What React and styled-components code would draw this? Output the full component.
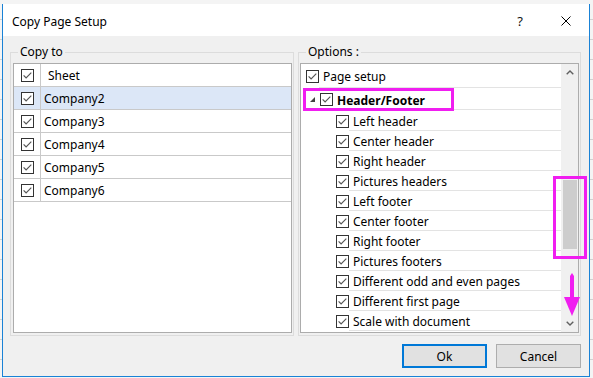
import React from 'react';
import styled, { createGlobalStyle } from 'styled-components';

const GlobalStyle = createGlobalStyle`
  html, body {
    margin: 0;
    padding: 0;
  }
  body {
    width: 593px;
    height: 378px;
    overflow: hidden;
    font-family: "Noto Sans", "Open Sans", sans-serif;
    font-size: 12px;
    color: #000;
  }
`;

const Desk = styled.div`
  width: 593px;
  height: 378px;
  box-sizing: border-box;
  padding: 4px 0 0 2px;
  background-color: #f4f4f4;
  background-image: repeating-linear-gradient(
    to bottom,
    transparent 0,
    transparent 19px,
    #d2d2d2 19px,
    #d2d2d2 20px
  );
`;

const Dialog = styled.div`
  width: 588px;
  height: 373px;
  box-sizing: border-box;
  border: 1px solid #1a82d6;
  border-top: none;
  display: flex;
  flex-direction: column;
  background: #f0f0f0;
`;

const TitleBar = styled.div`
  height: 32px;
  flex: none;
  display: flex;
  align-items: center;
  background: #fff;
  padding-left: 9px;
`;

const Title = styled.div`
  flex: 1;
  font-size: 12px;
  padding-top: 3px;
`;

const CaptionButton = styled.div`
  width: 46px;
  height: 32px;
  display: flex;
  align-items: center;
  justify-content: center;
  font-size: 13px;
  color: #111;
  padding-top: 1px;
  box-sizing: border-box;
`;

const Body = styled.div`
  flex: 1;
  display: flex;
  flex-direction: column;
  gap: 8px;
  padding: 8px 8px 8px 7px;
  min-height: 0;
`;

const Panels = styled.div`
  flex: 1;
  display: flex;
  gap: 4px;
  min-height: 0;
`;

const Group = styled.fieldset`
  margin: 0;
  width: ${(p) => p.$width}px;
  box-sizing: border-box;
  border: 1px solid #dcdcdc;
  padding: 3px 1px 2px ${(p) => p.$padLeft}px;
  display: flex;
  min-width: 0;
`;

const Legend = styled.legend`
  padding: 0 2px;
  margin-left: ${(p) => p.$offset}px;
  line-height: 16px;
  font-size: 12px;
`;

const ListBox = styled.div`
  flex: 1;
  position: relative;
  border: 1px solid #acacac;
  background: #fff;
  display: flex;
  align-items: stretch;
`;

const Table = styled.div`
  flex: 1;
  display: flex;
  flex-direction: column;
`;

const TableRow = styled.div`
  height: 22px;
  display: flex;
  align-items: center;
  border-bottom: 1px solid #c9c9c9;
  background: ${(p) => (p.$selected ? '#dce7f7' : '#fff')};
`;

const CheckCell = styled.div`
  width: 26px;
  height: 100%;
  flex: none;
  border-right: 1px solid #c9c9c9;
  display: flex;
  align-items: center;
  justify-content: center;
`;

const NameCell = styled.div`
  padding-left: ${(p) => (p.$header ? 7 : 3)}px;
  padding-top: 1px;
`;

const Tree = styled.div`
  flex: 1;
  display: flex;
  flex-direction: column;
`;

const TopRow = styled.div`
  height: ${(p) => p.$height}px;
  display: flex;
  align-items: center;
  padding-left: ${(p) => p.$indent}px;
`;

const RowLabel = styled.div`
  flex: 1;
  align-self: stretch;
  display: flex;
  align-items: center;
  padding: 1px 0 0 4px;
  border-bottom: 1px solid #e3e3e3;
  font-weight: ${(p) => (p.$bold ? 700 : 400)};
`;

const ChildRow = styled.div`
  height: 20px;
  display: flex;
  align-items: center;
  padding-left: 35px;
`;

const Highlight = styled.div`
  width: 151px;
  height: 23px;
  box-sizing: border-box;
  border: 3px solid #f01ef0;
  display: flex;
  align-items: center;
  padding-left: 4px;
  gap: 5px;
  font-weight: 700;
`;

const Filler = styled.div`
  flex: 1;
  align-self: stretch;
  border-bottom: 1px solid #e3e3e3;
  margin-bottom: 1px;
`;

const BoldText = styled.span`
  margin-left: -1px;
  padding-top: 1px;
`;

const Scrollbar = styled.div`
  width: 17px;
  flex: none;
  background: #f0f0f0;
  display: flex;
  flex-direction: column;
  align-items: center;
`;

const ScrollArrow = styled.div`
  height: 17px;
  width: 17px;
  display: flex;
  align-items: center;
  justify-content: center;
`;

const Track = styled.div`
  flex: 1;
  width: 100%;
  display: flex;
  justify-content: center;
`;

const Thumb = styled.div`
  width: 14px;
  height: 69px;
  margin-top: 99px;
  background: #cdcdcd;
`;

const MarkBox = styled.div`
  position: absolute;
  left: 252px;
  top: 112px;
  width: 34px;
  height: 83px;
  box-sizing: border-box;
  border: 3px solid #f01ef0;
  pointer-events: none;
`;

const MarkArrow = styled.svg`
  position: absolute;
  left: 262px;
  top: 209px;
  pointer-events: none;
`;

const Footer = styled.div`
  display: flex;
  justify-content: flex-end;
  gap: 9px;
`;

const Button = styled.div`
  width: 85px;
  height: 24px;
  box-sizing: border-box;
  display: flex;
  align-items: center;
  justify-content: center;
  background: #e1e1e1;
  border: ${(p) => (p.$default ? '2px solid #0078d7' : '1px solid #adadad')};
  font-size: 12px;
`;

const Check = () => (
  <svg width="13" height="13" viewBox="0 0 13 13">
    <rect x="0.5" y="0.5" width="12" height="12" fill="#fff" stroke="#333" />
    <path d="M2.6 6.4 L5.1 8.9 L10.3 3.7" fill="none" stroke="#555" strokeWidth="1.15" />
  </svg>
);

const Chevron = ({ up }) => (
  <svg width="8" height="5" viewBox="0 0 8 5">
    <path
      d={up ? 'M0.7 4.3 L4 1 L7.3 4.3' : 'M0.7 0.7 L4 4 L7.3 0.7'}
      fill="none"
      stroke="#606060"
      strokeWidth="1.4"
    />
  </svg>
);

const Expanded = () => (
  <svg width="5" height="5" viewBox="0 0 5 5">
    <polygon points="5,0 5,5 0,5" fill="#404040" />
  </svg>
);

const sheets = ['Company2', 'Company3', 'Company4', 'Company5', 'Company6'];

const options = [
  'Left header',
  'Center header',
  'Right header',
  'Pictures headers',
  'Left footer',
  'Center footer',
  'Right footer',
  'Pictures footers',
  'Different odd and even pages',
  'Different first page',
  'Scale with document',
];

const App = () => (
  <Desk>
    <GlobalStyle />
    <Dialog>
      <TitleBar>
        <Title>Copy Page Setup</Title>
        <CaptionButton>?</CaptionButton>
        <CaptionButton>
          <svg width="10" height="10" viewBox="0 0 10 10">
            <path d="M0.5 0.5 L9.5 9.5 M9.5 0.5 L0.5 9.5" stroke="#000" strokeWidth="1" />
          </svg>
        </CaptionButton>
      </TitleBar>
      <Body>
        <Panels>
          <Group $width={284} $padLeft={2}>
            <Legend $offset={5}>Copy to</Legend>
            <ListBox>
              <Table>
                <TableRow>
                  <CheckCell><Check /></CheckCell>
                  <NameCell $header>Sheet</NameCell>
                </TableRow>
                {sheets.map((name, i) => (
                  <TableRow key={name} $selected={i === 0}>
                    <CheckCell><Check /></CheckCell>
                    <NameCell>{name}</NameCell>
                  </TableRow>
                ))}
              </Table>
            </ListBox>
          </Group>
          <Group $width={283} $padLeft={1}>
            <Legend $offset={6}>Options :</Legend>
            <ListBox>
              <Tree>
                <TopRow $height={24} $indent={5}>
                  <Check />
                  <RowLabel>Page setup</RowLabel>
                </TopRow>
                <TopRow $height={23} $indent={2}>
                  <Highlight>
                    <Expanded />
                    <Check />
                    <BoldText>Header/Footer</BoldText>
                  </Highlight>
                  <Filler />
                </TopRow>
                {options.map((label) => (
                  <ChildRow key={label}>
                    <Check />
                    <RowLabel>{label}</RowLabel>
                  </ChildRow>
                ))}
              </Tree>
              <Scrollbar>
                <ScrollArrow><Chevron up /></ScrollArrow>
                <Track><Thumb /></Track>
                <ScrollArrow><Chevron /></ScrollArrow>
              </Scrollbar>
              <MarkBox />
              <MarkArrow width="18" height="44" viewBox="0 0 18 44">
                <polygon points="7,3 9,0 11,3 11,26 7,26" fill="#f01ef0" />
                <polygon points="1,24 17,24 9,43" fill="#f01ef0" />
              </MarkArrow>
            </ListBox>
          </Group>
        </Panels>
        <Footer>
          <Button $default>Ok</Button>
          <Button>Cancel</Button>
        </Footer>
      </Body>
    </Dialog>
  </Desk>
);

export default App;
